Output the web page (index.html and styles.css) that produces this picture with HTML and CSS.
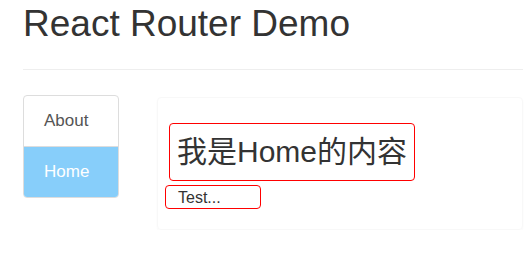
FILE: index.html
```
<!DOCTYPE html>
<html lang="zh">
<head>
<meta charset="utf-8">
<title>React Router Demo</title>
<link rel="stylesheet" href="styles.css">
</head>
<body>
<div class="container">
  <div class="page-header">
    <h1 class="title">React Router Demo</h1>
  </div>
  <div class="main">
    <div class="list-group">
      <a class="list-item" href="#about">About</a>
      <a class="list-item active" href="#home">Home</a>
    </div>
    <div class="panel">
      <h2 class="home-title">我是Home的内容</h2>
      <div class="test-box">Test...</div>
    </div>
  </div>
</div>
</body>
</html>
```
FILE: styles.css
```
html, body {
  margin: 0;
  padding: 0;
  background: #fff;
}
body {
  font-family: "Liberation Sans", Arial, "Noto Sans CJK SC", sans-serif;
  color: #333;
}
.container {
  padding: 0 9px 0 23px;
}
.page-header {
  padding: 4px 0 25px;
  border-bottom: 1px solid #eee;
}
.title {
  margin: 0;
  font-size: 37px;
  line-height: 40px;
  font-weight: normal;
  color: #333;
}
.main {
  display: flex;
  align-items: flex-start;
  margin-top: 25px;
}
.list-group {
  width: 96px;
  box-sizing: border-box;
  border: 1px solid #ddd;
  border-radius: 4px;
  overflow: hidden;
  display: flex;
  flex-direction: column;
}
.list-item {
  display: block;
  padding: 15px 20px;
  font-size: 17px;
  line-height: 20px;
  color: #555;
  text-decoration: none;
}
.list-item + .list-item {
  border-top: 1px solid #ddd;
}
.list-item.active {
  background: #87cefa;
  color: #fff;
}
.panel {
  flex: 1;
  margin-left: 38px;
  margin-top: 2px;
  padding: 25px 12px 20px 7px;
  border: 1px solid #f8f8f8;
  border-radius: 4px;
  box-shadow: 0 1px 2px rgba(0, 0, 0, 0.03);
}
.home-title {
  display: inline-block;
  margin: 0 0 4px 4px;
  padding: 11px 7px 12px;
  font-size: 30px;
  line-height: 33px;
  font-weight: normal;
  font-family: "Liberation Sans", Arial, "Noto Sans CJK SC", sans-serif;
  border: 1px solid #f00;
  border-radius: 4px;
  color: #333;
}
.test-box {
  width: 82px;
  padding: 2px 0 0 12px;
  font-size: 16px;
  line-height: 20px;
  border: 1px solid #f00;
  border-radius: 4px;
  color: #333;
}
```
